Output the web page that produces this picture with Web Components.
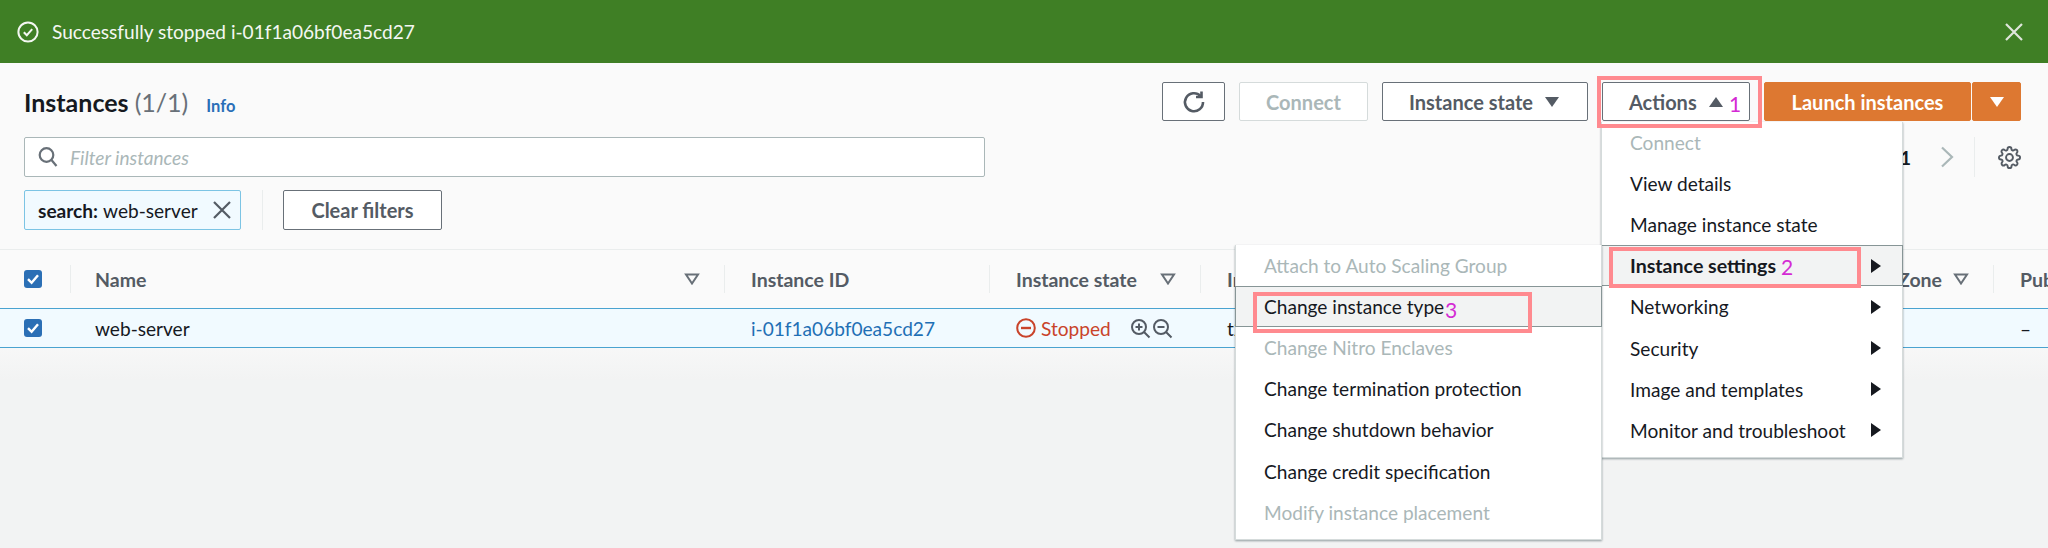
<!DOCTYPE html>
<html lang="en">
<head>
<meta charset="utf-8">
<title>Instances</title>
<style>
  html, body { margin: 0; height: 100%; }
  body {
    position: relative;
    width: 2048px;
    height: 548px;
    overflow: hidden;
    background: linear-gradient(#fafafa 0, #fafafa 330px, #f2f3f3 380px, #f2f3f3 100%);
    font: 19.1px "Lato", "Liberation Sans", sans-serif;
    color: #16191f;
  }
</style>
</head>
<body>

<flash-bar>Successfully stopped i-01f1a06bf0ea5cd27</flash-bar>
<instances-panel></instances-panel>
<instances-table></instances-table>

<action-menu style="left:1601px; top:122px; width:302px">
  <menu-item disabled>Connect</menu-item>
  <menu-item>View details</menu-item>
  <menu-item>Manage instance state</menu-item>
  <menu-item active submenu>Instance settings</menu-item>
  <menu-item submenu>Networking</menu-item>
  <menu-item submenu>Security</menu-item>
  <menu-item submenu>Image and templates</menu-item>
  <menu-item submenu>Monitor and troubleshoot</menu-item>
</action-menu>

<action-menu style="left:1235px; top:245px; width:367px">
  <menu-item disabled>Attach to Auto Scaling Group</menu-item>
  <menu-item active>Change instance type</menu-item>
  <menu-item disabled>Change Nitro Enclaves</menu-item>
  <menu-item>Change termination protection</menu-item>
  <menu-item>Change shutdown behavior</menu-item>
  <menu-item>Change credit specification</menu-item>
  <menu-item disabled>Modify instance placement</menu-item>
</action-menu>

<step-callout style="left:1597px; top:76px; width:165px; height:52px"></step-callout>
<step-callout style="left:1609px; top:247px; width:252px; height:41px"></step-callout>
<step-callout style="left:1253px; top:292px; width:279px; height:41px"></step-callout>
<step-number style="left:1729px; top:92px">1</step-number>
<step-number style="left:1781px; top:255px">2</step-number>
<step-number style="left:1445px; top:298px">3</step-number>

<script>
class FlashBar extends HTMLElement {
  connectedCallback() {
    this.attachShadow({ mode: 'open' });
    this.shadowRoot.innerHTML = `
      <style>
        :host { display: flex; align-items: center; height: 63px; padding: 0 24px 0 17px; background: #3f7f25; color: #f4f7f2; box-sizing: border-box; font-size: 19.1px; }
        .icon { width: 22px; height: 22px; margin-right: 13px; flex: none; }
        .text { flex: 1; }
        .close { width: 20px; height: 20px; flex: none; }
      </style>
      <svg class="icon" viewBox="0 0 22 22" fill="none" stroke="#f4f7f2" stroke-width="2"><circle cx="11" cy="11" r="9.6"/><path d="M6.8 11.2l3 3 5.4-6"/></svg>
      <span class="text"><slot></slot></span>
      <svg class="close" viewBox="0 0 20 20" stroke="#dfe6dc" stroke-width="2.2"><path d="M2 2l16 16M18 2L2 18"/></svg>
    `;
  }
}

class AwsButton extends HTMLElement {
  connectedCallback() {
    this.attachShadow({ mode: 'open' });
    this.shadowRoot.innerHTML = `
      <style>
        :host { display: flex; align-items: center; justify-content: center; box-sizing: border-box; height: 39px; background: #fff; border: 1.5px solid #687078; border-radius: 2px; color: #545b64; font-weight: 700; font-size: 20px; gap: 11px; flex: none; white-space: nowrap; }
        :host([start]) { justify-content: flex-start; padding-left: 26px; }
        :host([disabled]) { border-color: #d5dbdb; color: #aab7b8; }
        :host([primary]) { background: #dd7831; border-color: #dd7831; color: #fff; }
      </style>
      <slot></slot>
    `;
  }
}

class InstancesPanel extends HTMLElement {
  connectedCallback() {
    this.attachShadow({ mode: 'open' });
    this.shadowRoot.innerHTML = `
      <style>
        :host { display: block; height: 187px; box-sizing: border-box; padding: 19px 27px 0 24px; border-bottom: 1px solid #eaeded; }
        .top, .filter, .tokens { display: flex; align-items: center; }
        .top { height: 39px; gap: 14px; }
        h1 { margin: 0; font-size: 25px; font-weight: 700; color: #16191f; white-space: nowrap; }
        h1 span { font-weight: 400; color: #687078; }
        .title { flex: 1; display: flex; align-items: baseline; gap: 18px; }
        .info { color: #2a6fb8; font-size: 16.5px; font-weight: 700; }
        .filter { margin-top: 16px; height: 40px; }
        .search { width: 961px; height: 40px; box-sizing: border-box; background: #fff; border: 1.5px solid #aab7b8; border-radius: 2px; display: flex; align-items: center; padding-left: 13px; color: #aab7b8; font-style: italic; flex: none; }
        .search svg { width: 20px; height: 22px; margin-right: 12px; }
        .pager { margin-left: auto; display: flex; align-items: center; height: 40px; }
        .pager b { margin-right: 29px; }
        .pager .sep { width: 1px; height: 40px; background: #eaeded; margin: 0 23px 0 20px; }
        .tokens { margin-top: 13px; height: 40px; }
        .token { width: 217px; height: 40px; box-sizing: border-box; background: #f1faff; border: 1.5px solid #7cc4e4; border-radius: 2px; display: flex; align-items: center; padding-left: 13px; white-space: nowrap; }
        .token b { margin-right: 5px; }
        .token svg { width: 20px; height: 20px; margin-left: auto; margin-right: 8px; flex: none; }
        .vr { width: 1px; height: 40px; background: #eaeded; margin: 0 20px 0 21px; }
      </style>
      <div class="top">
        <div class="title"><h1>Instances <span>(1/1)</span></h1><span class="info">Info</span></div>
        <aws-button style="width:63px"><svg width="26" height="26" viewBox="0 0 26 26" fill="none" stroke="#545b64" stroke-width="2.6"><path d="M19.5 7A9 9 0 1 0 22 13"/><path d="M20.5 2.5v5.5H15"/></svg></aws-button>
        <aws-button disabled style="width:129px">Connect</aws-button>
        <aws-button start style="width:206px">Instance state <svg width="16" height="12" viewBox="0 0 16 12" fill="#545b64"><path d="M1 1h14L8 11z"/></svg></aws-button>
        <aws-button start style="width:148px">Actions <svg width="16" height="12" viewBox="0 0 16 12" fill="#545b64"><path d="M1 11h14L8 1z"/></svg></aws-button>
        <div style="display:flex; gap:1px">
          <aws-button primary style="width:207px">Launch instances</aws-button>
          <aws-button primary style="width:49px"><svg width="16" height="12" viewBox="0 0 16 12" fill="#fff"><path d="M1 1h14L8 11z"/></svg></aws-button>
        </div>
      </div>
      <div class="filter">
        <div class="search">
          <svg viewBox="0 0 20 22" fill="none" stroke="#687078" stroke-width="2.2"><circle cx="8.5" cy="9" r="6.8"/><path d="M13.5 14l5 6"/></svg>
          Filter instances
        </div>
        <div class="pager">
          <b>1</b>
          <svg width="14" height="22" viewBox="0 0 14 22" fill="none" stroke="#aab7b8" stroke-width="2.2"><path d="M2 1.5l10 9.5L2 20.5"/></svg>
          <span class="sep"></span>
          <svg width="23" height="23" viewBox="0 0 24 24" fill="none" stroke="#545b64" stroke-width="2"><circle cx="12" cy="12" r="3.6"/><path d="M19.4 15a1.65 1.65 0 0 0 .33 1.82l.06.06a2 2 0 0 1 0 2.83 2 2 0 0 1-2.83 0l-.06-.06a1.65 1.65 0 0 0-1.82-.33 1.65 1.65 0 0 0-1 1.51V21a2 2 0 0 1-2 2 2 2 0 0 1-2-2v-.09A1.65 1.65 0 0 0 9 19.4a1.65 1.65 0 0 0-1.82.33l-.06.06a2 2 0 0 1-2.83 0 2 2 0 0 1 0-2.83l.06-.06a1.65 1.65 0 0 0 .33-1.82 1.65 1.65 0 0 0-1.51-1H3a2 2 0 0 1-2-2 2 2 0 0 1 2-2h.09A1.65 1.65 0 0 0 4.6 9a1.65 1.65 0 0 0-.33-1.82l-.06-.06a2 2 0 0 1 0-2.83 2 2 0 0 1 2.83 0l.06.06a1.65 1.65 0 0 0 1.82.33H9a1.65 1.65 0 0 0 1-1.51V3a2 2 0 0 1 2-2 2 2 0 0 1 2 2v.09a1.65 1.65 0 0 0 1 1.51 1.65 1.65 0 0 0 1.82-.33l.06-.06a2 2 0 0 1 2.83 0 2 2 0 0 1 0 2.83l-.06.06a1.65 1.65 0 0 0-.33 1.82V9a1.65 1.65 0 0 0 1.51 1H21a2 2 0 0 1 2 2 2 2 0 0 1-2 2h-.09a1.65 1.65 0 0 0-1.51 1z"/></svg>
        </div>
      </div>
      <div class="tokens">
        <div class="token"><b>search:</b> web-server
          <svg viewBox="0 0 20 20" stroke="#545b64" stroke-width="2.2"><path d="M2 2l16 16M18 2L2 18"/></svg>
        </div>
        <span class="vr"></span>
        <aws-button style="width:159px; height:40px">Clear filters</aws-button>
      </div>
    `;
  }
}

class HeadCell extends HTMLElement {
  connectedCallback() {
    this.attachShadow({ mode: 'open' });
    const sort = this.hasAttribute('plain') ? '' : `<svg class="tri" width="16" height="12" viewBox="0 0 16 12" fill="none" stroke="#687078" stroke-width="2"><path d="M2 1.5h12L8 10.5z"/></svg>`;
    this.shadowRoot.innerHTML = `
      <style>
        :host { display: flex; align-items: center; position: relative; height: 58px; box-sizing: border-box; padding: 0 24px 0 27px; color: #545b64; font-weight: 700; font-size: 19.5px; white-space: nowrap; overflow: hidden; }
        :host::before { content: ""; position: absolute; left: 0; top: 15px; height: 28px; width: 1px; background: #eaeded; }
        :host([first]) { padding-left: 25px; }
        .tri { margin-left: auto; flex: none; }
        :host([end]) .txt { margin-left: auto; }
        :host([end]) .tri { margin-left: 11px; }
      </style>
      <span class="txt"><slot></slot></span>${sort}
    `;
  }
}

class InstancesTable extends HTMLElement {
  connectedCallback() {
    this.attachShadow({ mode: 'open' });
    this.shadowRoot.innerHTML = `
      <style>
        :host { display: block; }
        .head, .row { display: grid; grid-template-columns: 70px 654px 265px 211px 560px 233px 55px; }
        .row { height: 40px; box-sizing: border-box; background: #f1faff; border-top: 1.5px solid #4aa3d0; border-bottom: 1.5px solid #4aa3d0; align-items: center; }
        .row > div { padding-left: 27px; white-space: nowrap; overflow: hidden; }
        .row > .check { padding-left: 24px; display: flex; }
        .head .check { display: flex; align-items: center; padding-left: 24px; }
        .row > .name { padding-left: 25px; }
        .link { color: #1f6fb5; }
        .state { display: flex; align-items: center; color: #c9432a; gap: 5px; }
        .mag { display: flex; gap: 1px; margin-left: 14px; }
      </style>
      <div class="head">
        <div class="check"><check-box></check-box></div>
        <head-cell first>Name</head-cell>
        <head-cell plain>Instance ID</head-cell>
        <head-cell>Instance state</head-cell>
        <head-cell plain>Instance type</head-cell>
        <head-cell end>Availability Zone</head-cell>
        <head-cell plain>Public</head-cell>
      </div>
      <div class="row">
        <div class="check"><check-box></check-box></div>
        <div class="name">web-server</div>
        <div class="link">i-01f1a06bf0ea5cd27</div>
        <div class="state">
          <svg width="20" height="20" viewBox="0 0 20 20" fill="none" stroke="#c9432a" stroke-width="2"><circle cx="10" cy="10" r="8.8"/><path d="M5 10h10" stroke-width="2.4"/></svg>
          Stopped
          <span class="mag">
            <svg width="21" height="21" viewBox="0 0 21 21" fill="none" stroke="#545b64" stroke-width="2"><circle cx="9" cy="9" r="7"/><path d="M14 14l5.5 5.5M9 5.5v7M5.5 9h7"/></svg>
            <svg width="21" height="21" viewBox="0 0 21 21" fill="none" stroke="#545b64" stroke-width="2"><circle cx="9" cy="9" r="7"/><path d="M14 14l5.5 5.5M5.5 9h7"/></svg>
          </span>
        </div>
        <div>t2.micro</div>
        <div></div>
        <div>–</div>
      </div>
    `;
  }
}

class CheckBox extends HTMLElement {
  connectedCallback() {
    this.attachShadow({ mode: 'open' });
    this.shadowRoot.innerHTML = `
      <style>:host { display: block; width: 18px; height: 18px; line-height: 0; }</style>
      <svg width="18" height="18" viewBox="0 0 18 18"><rect width="18" height="18" rx="3" fill="#2b6fb5"/><path d="M4 9.2l3.6 3.6L14 5.2" fill="none" stroke="#fff" stroke-width="2.4"/></svg>
    `;
  }
}

class ActionMenu extends HTMLElement {
  connectedCallback() {
    this.attachShadow({ mode: 'open' });
    this.shadowRoot.innerHTML = `
      <style>
        :host { display: block; position: absolute; box-sizing: border-box; background: #fff; border: 1px solid #d5dbdb; border-top: 0; padding-bottom: 6px; box-shadow: 0 1px 2px rgba(0,28,36,.4); }
      </style>
      <slot></slot>
    `;
  }
}

class MenuItem extends HTMLElement {
  connectedCallback() {
    this.attachShadow({ mode: 'open' });
    const arrow = this.hasAttribute('submenu') ? `<svg class="arrow" width="12" height="14" viewBox="0 0 12 14" fill="#16191f"><path d="M1 0l10 7-10 7z"/></svg>` : '';
    this.shadowRoot.innerHTML = `
      <style>
        :host { display: flex; align-items: center; height: 41.1px; box-sizing: border-box; padding: 0 20px 0 28px; color: #16191f; font-size: 19.1px; white-space: nowrap; border-top: 1px solid transparent; border-bottom: 1px solid transparent; }
        :host([disabled]) { color: #aab7b8; }
        :host([active]) { background: #f2f3f3; border: 1px solid #879596; margin: 0 -1px; }
        :host([active][submenu]) { font-weight: 700; font-size: 19.6px; }
        .arrow { margin-left: auto; flex: none; }
      </style>
      <slot></slot>${arrow}
    `;
  }
}

class StepCallout extends HTMLElement {
  connectedCallback() {
    this.attachShadow({ mode: 'open' });
    this.shadowRoot.innerHTML = `
      <style>:host { display: block; position: absolute; box-sizing: border-box; border: 4px solid #ff8a8f; }</style>
    `;
  }
}

class StepNumber extends HTMLElement {
  connectedCallback() {
    this.attachShadow({ mode: 'open' });
    this.shadowRoot.innerHTML = `
      <style>:host { display: block; position: absolute; color: #d42ad4; font: 400 21px/24px "Lato", "Liberation Sans", sans-serif; }</style>
      <slot></slot>
    `;
  }
}

customElements.define('flash-bar', FlashBar);
customElements.define('aws-button', AwsButton);
customElements.define('instances-panel', InstancesPanel);
customElements.define('head-cell', HeadCell);
customElements.define('check-box', CheckBox);
customElements.define('instances-table', InstancesTable);
customElements.define('action-menu', ActionMenu);
customElements.define('menu-item', MenuItem);
customElements.define('step-callout', StepCallout);
customElements.define('step-number', StepNumber);
</script>
</body>
</html>
